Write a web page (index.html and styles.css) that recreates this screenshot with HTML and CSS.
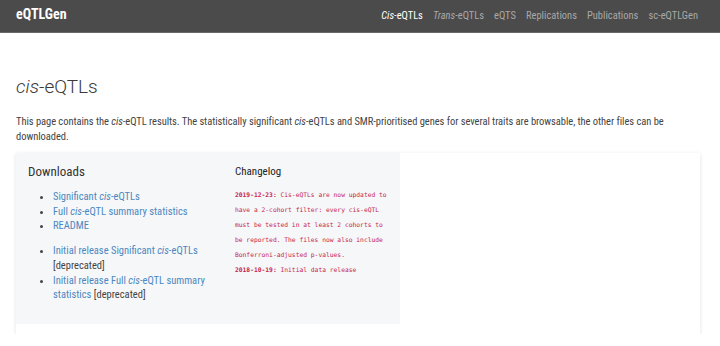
FILE: index.html
```html
<!DOCTYPE html>
<html>
<head>
<meta charset="utf-8">
<link rel="stylesheet" href="styles.css">
</head>
<body>
<nav class="navbar">
  <a class="brand" href="#">eQTLGen</a>
  <ul class="nav">
    <li class="active"><a href="#"><i>Cis</i>-eQTLs</a></li>
    <li><a href="#"><i>Trans</i>-eQTLs</a></li>
    <li><a href="#">eQTS</a></li>
    <li><a href="#">Replications</a></li>
    <li><a href="#">Publications</a></li>
    <li><a href="#">sc-eQTLGen</a></li>
  </ul>
</nav>
<main class="container">
  <h1 class="title"><i>cis</i>-eQTLs</h1>
  <p class="intro">This page contains the <i>cis</i>-eQTL results. The statistically significant <i>cis</i>-eQTLs and SMR-prioritised genes for several traits are browsable, the other files can be downloaded.</p>
  <div class="card">
    <div class="panel">
      <div class="downloads">
        <h2>Downloads</h2>
        <ul class="links">
          <li><a href="#">Significant <i>cis</i>-eQTLs</a></li>
          <li><a href="#">Full <i>cis</i>-eQTL summary statistics</a></li>
          <li><a href="#">README</a></li>
        </ul>
        <ul class="links">
          <li><a href="#">Initial release Significant <i>cis</i>-eQTLs</a> [deprecated]</li>
          <li><a href="#">Initial release Full <i>cis</i>-eQTL summary statistics</a> [deprecated]</li>
        </ul>
      </div>
      <div class="changelog">
        <h3>Changelog</h3>
        <p class="log"><b>2019-12-23:</b> Cis-eQTLs are now updated to have a 2-cohort filter: every cis-eQTL must be tested in at least 2 cohorts to be reported. The files now also include Bonferroni-adjusted p-values.</p>
        <p class="log"><b>2018-10-19:</b> Initial data release</p>
      </div>
    </div>
  </div>
</main>
</body>
</html>
```
FILE: styles.css
```css
* { box-sizing: border-box; }
body {
  margin: 0;
  font-family: "Liberation Sans Narrow", "Roboto Condensed", Roboto, sans-serif;
  color: #333;
  background: #fff;
}
a { text-decoration: none; }
.navbar {
  height: 33px;
  background: #4b4b4b;
  border-bottom: 1px solid #6a6a6a;
  display: flex;
  align-items: flex-start;
  justify-content: space-between;
  padding: 5px 22px 0 16px;
}
.brand {
  color: #fff;
  font-size: 14px;
  font-weight: 700;
  line-height: 18px;
}
.nav {
  list-style: none;
  margin: 0;
  padding: 0;
  display: flex;
  gap: 10px;
  line-height: 18px;
}
.nav a {
  color: #a8a8a8;
  font-size: 10.5px;
}
.nav .active a { color: #fff; }
.container {
  padding: 40px 20px 0 16px;
}
.title {
  margin: 0;
  font-family: Roboto, sans-serif;
  font-size: 19px;
  font-weight: 300;
  line-height: 28px;
  color: #3a3a3a;
}
.intro {
  margin: 13px 0 0;
  font-size: 10.5px;
  letter-spacing: -0.05px;
  line-height: 15px;
  color: #444;
}
.card {
  margin-top: 9px;
  background: #fff;
  box-shadow: 0 1px 4px rgba(0,0,0,0.12);
  padding-bottom: 10px;
}
.panel {
  width: 384px;
  background: #f6f7f9;
  display: flex;
  padding: 10px 0 21px 12px;
}
.downloads { width: 207px; }
.downloads h2 {
  margin: 0;
  font-size: 13px;
  font-weight: 400;
  line-height: 18px;
  color: #333;
}
.links {
  margin: 9px 0 0;
  padding-left: 25px;
  font-size: 10.5px;
  line-height: 14.7px;
  color: #444;
}
.links + .links { margin-top: 10px; }
.links a { color: #4d87c0; }
.changelog { width: 156px; }
.changelog h3 {
  margin: 1px 0 0;
  font-size: 11px;
  font-weight: 400;
  line-height: 15px;
  color: #222;
}
.log {
  margin: 8px 0 0;
  font-family: "DejaVu Sans Mono", monospace;
  font-size: 6.3px;
  line-height: 15px;
  color: #c7254e;
}
.log + .log { margin-top: 0; }
```
